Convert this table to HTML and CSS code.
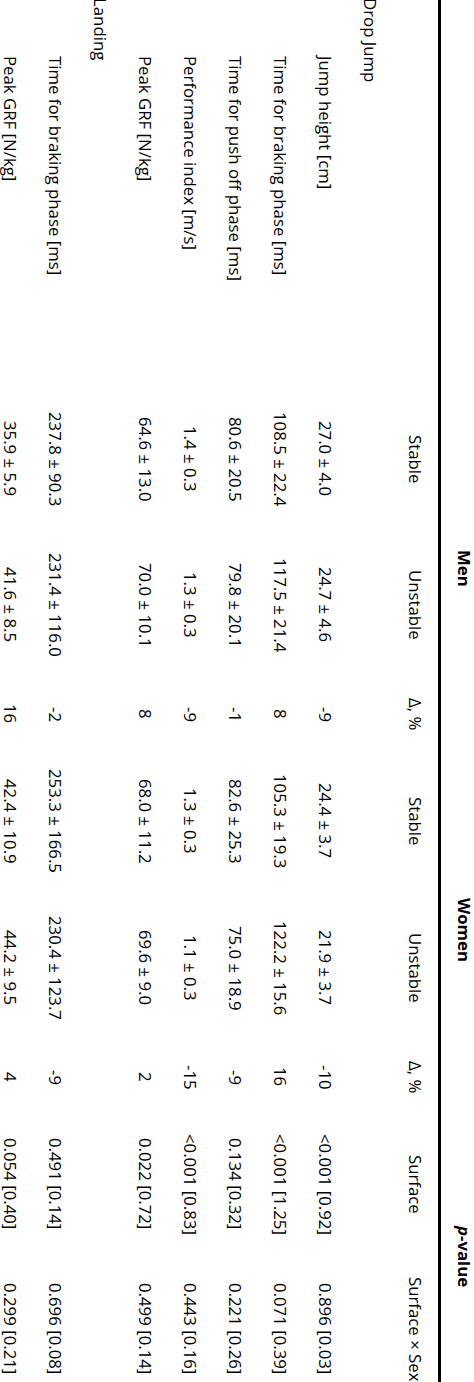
FILE: index.html
```html
<!DOCTYPE html>
<html lang="en">
<head>
<meta charset="utf-8">
<title>Drop jump and landing</title>
<link rel="stylesheet" href="styles.css">
</head>
<body>
<div class="sheet">
  <table class="results">
    <colgroup>
      <col class="c-label">
      <col class="c-men-stable">
      <col class="c-unstable">
      <col class="c-delta">
      <col class="c-women-stable">
      <col class="c-unstable">
      <col class="c-delta">
      <col class="c-p">
      <col class="c-p">
    </colgroup>
    <thead>
      <tr class="group-row">
        <th class="label"></th>
        <th colspan="3">Men</th>
        <th colspan="3">Women</th>
        <th colspan="2"><i>p</i>-value</th>
      </tr>
      <tr class="sub-row">
        <th class="label"></th>
        <th>Stable</th>
        <th>Unstable</th>
        <th>Δ, %</th>
        <th>Stable</th>
        <th>Unstable</th>
        <th>Δ, %</th>
        <th>Surface</th>
        <th>Surface × Sex</th>
      </tr>
    </thead>
    <tbody>
      <tr>
        <td class="label">Drop Jump</td>
        <td></td><td></td><td></td><td></td><td></td><td></td><td></td><td></td>
      </tr>
      <tr>
        <td class="label indent">Jump height [cm]</td>
        <td>27.0 ± 4.0</td><td>24.7 ± 4.6</td><td>-9</td>
        <td>24.4 ± 3.7</td><td>21.9 ± 3.7</td><td>-10</td>
        <td>&lt;0.001 [0.92]</td><td>0.896 [0.03]</td>
      </tr>
      <tr>
        <td class="label indent">Time for braking phase [ms]</td>
        <td>108.5 ± 22.4</td><td>117.5 ± 21.4</td><td>8</td>
        <td>105.3 ± 19.3</td><td>122.2 ± 15.6</td><td>16</td>
        <td>&lt;0.001 [1.25]</td><td>0.071 [0.39]</td>
      </tr>
      <tr>
        <td class="label indent">Time for push off phase [ms]</td>
        <td>80.6 ± 20.5</td><td>79.8 ± 20.1</td><td>-1</td>
        <td>82.6 ± 25.3</td><td>75.0 ± 18.9</td><td>-9</td>
        <td>0.134 [0.32]</td><td>0.221 [0.26]</td>
      </tr>
      <tr>
        <td class="label indent">Performance index [m/s]</td>
        <td>1.4 ± 0.3</td><td>1.3 ± 0.3</td><td>-9</td>
        <td>1.3 ± 0.3</td><td>1.1 ± 0.3</td><td>-15</td>
        <td>&lt;0.001 [0.83]</td><td>0.443 [0.16]</td>
      </tr>
      <tr>
        <td class="label indent">Peak GRF [N/kg]</td>
        <td>64.6 ± 13.0</td><td>70.0 ± 10.1</td><td>8</td>
        <td>68.0 ± 11.2</td><td>69.6 ± 9.0</td><td>2</td>
        <td>0.022 [0.72]</td><td>0.499 [0.14]</td>
      </tr>
      <tr>
        <td class="label">Landing</td>
        <td></td><td></td><td></td><td></td><td></td><td></td><td></td><td></td>
      </tr>
      <tr>
        <td class="label indent">Time for braking phase [ms]</td>
        <td>237.8 ± 90.3</td><td>231.4 ± 116.0</td><td>-2</td>
        <td>253.3 ± 166.5</td><td>230.4 ± 123.7</td><td>-9</td>
        <td>0.491 [0.14]</td><td>0.696 [0.08]</td>
      </tr>
      <tr>
        <td class="label indent">Peak GRF [N/kg]</td>
        <td>35.9 ± 5.9</td><td>41.6 ± 8.5</td><td>16</td>
        <td>42.4 ± 10.9</td><td>44.2 ± 9.5</td><td>4</td>
        <td>0.054 [0.40]</td><td>0.299 [0.21]</td>
      </tr>
    </tbody>
  </table>
</div>
</body>
</html>
```
FILE: styles.css
```css
html, body {
  margin: 0;
  padding: 0;
  background: #ffffff;
}

.sheet {
  writing-mode: vertical-rl;
  width: 474px;
  height: 1382px;
  overflow: hidden;
  background: #ffffff;
}

.results {
  writing-mode: vertical-rl;
  text-orientation: sideways;
  border-collapse: separate;
  border-spacing: 0;
  table-layout: fixed;
  inline-size: 1404px;
  margin-inline-start: -2.5px;
  font-family: "Open Sans", "Liberation Sans", sans-serif;
  font-size: 16.8px;
  line-height: normal;
  color: #000000;
}

.c-label { inline-size: 390px; }
.c-men-stable { inline-size: 143px; }
.c-women-stable { inline-size: 145px; }
.c-unstable { inline-size: 149px; }
.c-delta { inline-size: 69px; }
.c-p { inline-size: 145px; }

.results th,
.results td {
  box-sizing: border-box;
  padding: 0;
  block-size: 45px;
  vertical-align: middle;
  text-align: center;
  white-space: nowrap;
  font-weight: 400;
}

.results .group-row th {
  block-size: 36px;
  padding-block-end: 13.5px;
  line-height: 18px;
  border-block-end: 3px solid #000000;
  font-weight: 700;
}

.results .label {
  text-align: start;
}

.results .indent {
  padding-inline-start: 58.5px;
}
```
